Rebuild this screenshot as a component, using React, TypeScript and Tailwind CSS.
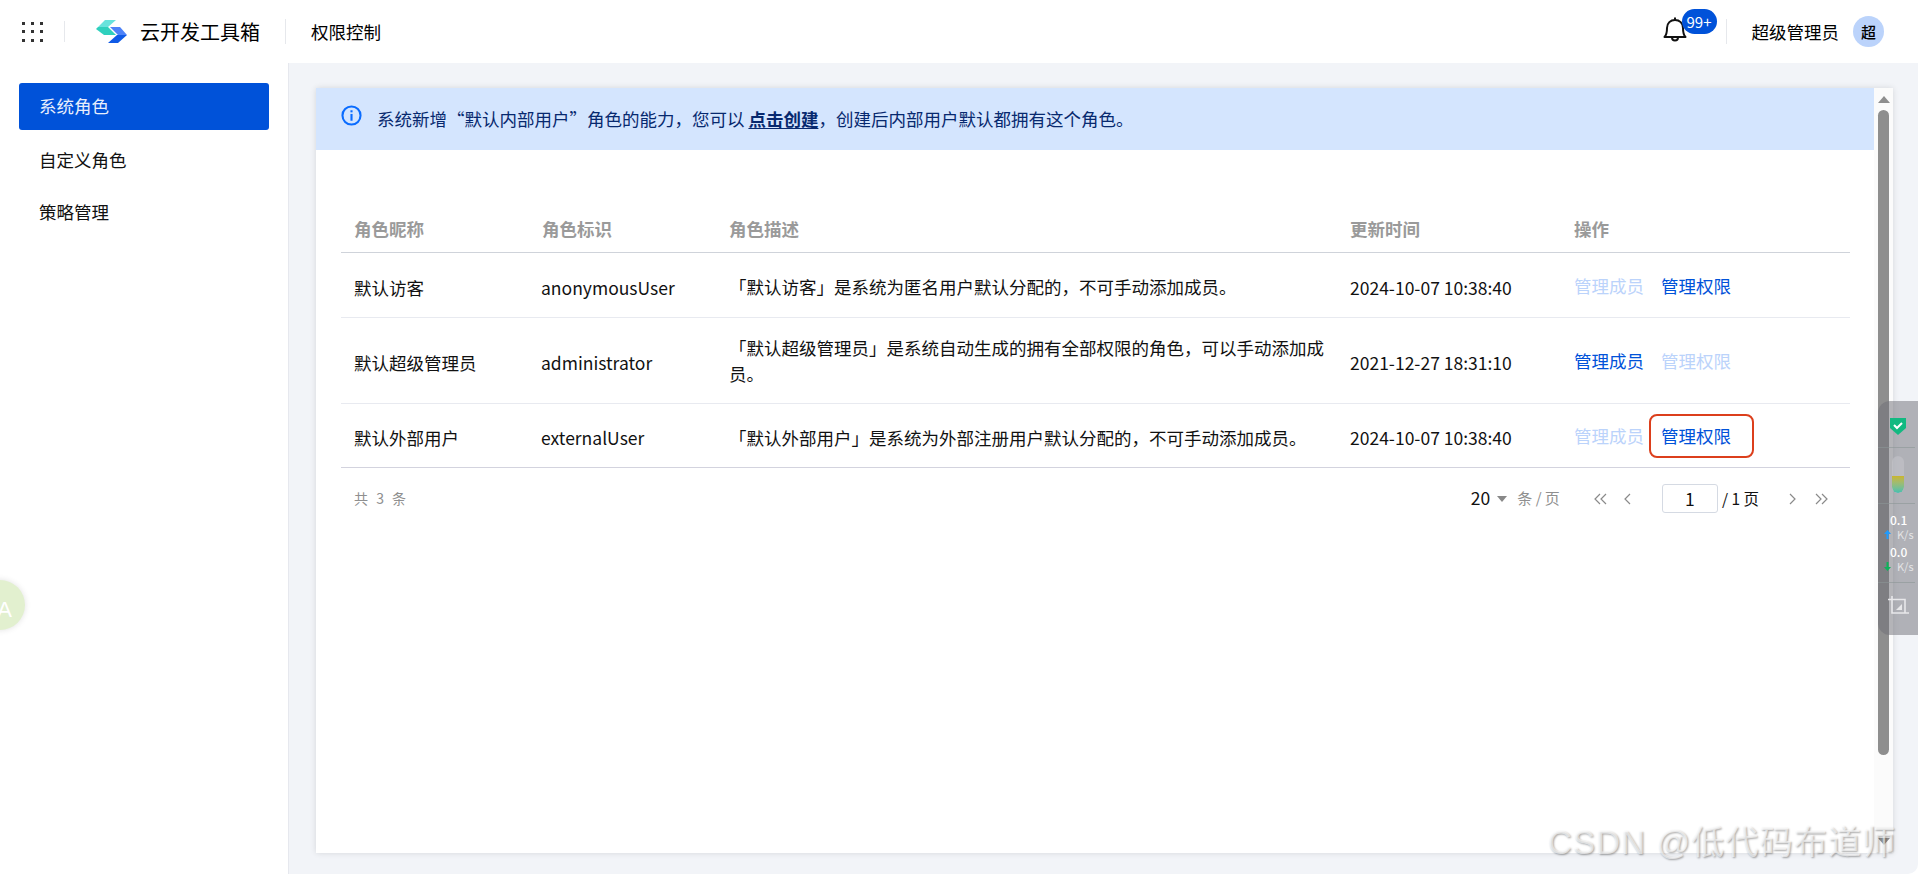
import React from "react";

const font = { fontFamily: '"Noto Sans CJK SC", "Noto Sans", sans-serif' };

function Logo() {
  return (
    <svg width="31" height="23" viewBox="0 0 31 23">
      <polygon points="0,9 9,0 20,0 12,7 2,7" fill="#68e3dc" />
      <polygon points="2,7 12,7 20,15 8,15 0,9" fill="#2fd0bd" />
      <polygon points="14,7 24,7 31,15 22,15" fill="#4d82f8" />
      <polygon points="31,15 22,23 12,23 21,15" fill="#0f5ae6" />
    </svg>
  );
}

function Dots() {
  return (
    <div className="grid grid-cols-3 gap-x-[6px] gap-y-[5.5px]">
      {Array.from({ length: 9 }).map((_, i) => (
        <span key={i} className="w-[3px] h-[3px] bg-[#333] block" />
      ))}
    </div>
  );
}

const rows = [
  { name: "默认访客", id: "anonymousUser", desc: "「默认访客」是系统为匿名用户默认分配的\uFF0C不可手动添加成员。", time: "2024-10-07 10:38:40", m: false, p: true, h: "h-[65px]", two: false },
  { name: "默认超级管理员", id: "administrator", desc: "「默认超级管理员」是系统自动生成的拥有全部权限的角色\uFF0C可以手动添加成员。", time: "2021-12-27 18:31:10", m: true, p: false, h: "h-[86px]", two: true },
  { name: "默认外部用户", id: "externalUser", desc: "「默认外部用户」是系统为外部注册用户默认分配的\uFF0C不可手动添加成员。", time: "2024-10-07 10:38:40", m: false, p: true, h: "h-[64px]", mark: true, two: false },
];

function Chevrons({ dir, double }: { dir: "l" | "r"; double?: boolean }) {
  const d = dir === "l" ? ["M7 2 L2 7 L7 12", "M13 2 L8 7 L13 12"] : ["M2 2 L7 7 L2 12", "M8 2 L13 7 L8 12"];
  return (
    <svg width="15" height="14" viewBox="0 0 15 14" fill="none" stroke="#8a8a8a" strokeWidth="1.2" className="block">
      <path d={double ? d[0] : dir === "l" ? "M10 2 L5 7 L10 12" : "M5 2 L10 7 L5 12"} />
      {double && <path d={d[1]} />}
    </svg>
  );
}

export default function App() {
  return (
    <div style={font} className="relative w-[1918px] h-[874px] overflow-hidden bg-white text-black rounded-br-[10px] flex flex-col">
      <header className="h-[63px] shrink-0 flex items-center bg-white">
        <div className="ml-[22px] w-[21px]"><Dots /></div>
        <div className="ml-[21px] w-px h-[21px] bg-[#e6e8ec]" />
        <div className="ml-[31px] flex"><Logo /></div>
        <span className="ml-[13px] text-[20px] leading-[28px] w-[120px] whitespace-nowrap">云开发工具箱</span>
        <div className="ml-[25px] w-px h-[25px] bg-[#e6e8ec]" />
        <span className="ml-[25px] text-[17.5px] leading-[24px] whitespace-nowrap">权限控制</span>
        <div className="ml-auto relative w-[24px] h-[26px] -mt-[5px]">
          <svg width="24" height="26" viewBox="0 0 24 26" fill="none" stroke="#111" strokeWidth="2" className="block -ml-[2px]">
            <path d="M1.5 21 C4 18.5 4 16 4 12 C4 7 7.5 4 12 4 C16.5 4 20 7 20 12 C20 16 20 18.5 22.5 21 Z" strokeLinejoin="round" />
            <path d="M12 1.5 V4" />
            <path d="M9 21.5 C9 25.5 15 25.5 15 21.5" />
          </svg>
          <span className="absolute left-[17px] top-[-7px] h-[25px] w-[35px] rounded-full bg-[#0052d9] text-white text-[15px] leading-[25px] text-center">99+</span>
        </div>
        <div className="ml-[37px] w-px h-[25px] bg-[#e6e8ec]" />
        <span className="ml-[25px] text-[17.5px] leading-[24px] whitespace-nowrap">超级管理员</span>
        <span className="ml-[14px] mr-[34px] w-[31px] h-[31px] rounded-full bg-[#bbd3fb] text-[15px] leading-[31px] text-center font-medium">超</span>
      </header>

      <div className="flex-1 flex min-h-0">
        <aside className="w-[289px] shrink-0 bg-white border-r border-[#e6e8ee] pt-[20px] px-[19px] text-[17.5px]">
          <div className="h-[47px] w-[250px] rounded-[3px] bg-[#0052d9] text-[#e8eefc] flex items-center pl-[20px]">系统角色</div>
          <div className="h-[52px] mt-[4px] flex items-center pl-[20px] text-[#111]">自定义角色</div>
          <div className="h-[52px] flex items-center pl-[20px] text-[#111]">策略管理</div>
        </aside>

        <main className="flex-1 bg-[#f2f4f8] pt-[25px] pl-[27px] pr-[25px] pb-[21px] min-w-0">
          <div className="h-full bg-white shadow-[0_0_6px_rgba(0,0,0,0.12)] flex">
            <div className="flex-1 min-w-0">
              <div className="h-[62px] bg-[#d4e5fe] flex items-center pl-[25px] text-[17.5px] text-[#07296f]">
                <svg width="21" height="21" viewBox="0 0 20 20" className="mr-[15px] -mt-[7px]">
                  <circle cx="10" cy="10" r="8.6" fill="none" stroke="#0a6cff" strokeWidth="2" />
                  <rect x="9" y="8.5" width="2" height="6.5" fill="#0a6cff" />
                  <rect x="9" y="5" width="2" height="2" fill="#0a6cff" />
                </svg>
                <span>系统新增“默认内部用户”角色的能力{"\uFF0C"}您可以 <a className="font-bold underline underline-offset-2">点击创建</a>{"\uFF0C"}创建后内部用户默认都拥有这个角色。</span>
              </div>

              <div className="ml-[25px] mt-[56px] mr-[24px]">
                <div className="grid grid-cols-[187px_187px_621px_224px_1fr] h-[47px] items-center border-b border-[#cfd3da] text-[17.5px] font-bold text-[#9a9a9a]">
                  <div className="pl-[13px]">角色昵称</div>
                  <div className="pl-[14px]">角色标识</div>
                  <div className="pl-[14px]">角色描述</div>
                  <div className="pl-[14px]">更新时间</div>
                  <div className="pl-[14px]">操作</div>
                </div>
                {rows.map((r, i) => (
                  <div key={r.id} className={`grid grid-cols-[187px_187px_621px_224px_1fr] ${r.h} pt-[5px] items-center border-b ${i === 2 ? "border-[#d3d3de]" : "border-[#e8eaf0]"} text-[17.5px] text-[#111]`}>
                    <div className="pl-[13px] mt-[1px]">{r.name}</div>
                    <div className="pl-[14px] -ml-px mt-[1px]">{r.id}</div>
                    <div className={`pl-[14px] pr-[8px] leading-[26px] ${r.two ? "-mt-[4px]" : "-mt-[1px]"}`}>{r.desc}</div>
                    <div className="pl-[14px] mt-[1px]">{r.time}</div>
                    <div className="pl-[14px] flex gap-[17px] -mt-[3px]">
                      <span className={r.m ? "text-[#0052d9]" : "text-[#bbd3fb]"}>管理成员</span>
                      <span className={`relative ${r.p ? "text-[#0052d9]" : "text-[#bbd3fb]"}`}>
                        管理权限
                        {r.mark && <span className="absolute left-[-12px] top-[-9px] w-[105px] h-[44px] border-[2.5px] border-[#dc3f1c] rounded-[8px]" />}
                      </span>
                    </div>
                  </div>
                ))}
                <div className="flex items-center h-[60px] pt-[1px] pl-[13px] pr-[21px] text-[#8f8f8f]">
                  <span className="text-[14px] tracking-[2.5px]">共 3 条</span>
                  <span className="ml-auto text-[17.5px] text-[#111]">20</span>
                  <span className="ml-[7px] w-0 h-0 border-x-[5px] border-x-transparent border-t-[6px] border-t-[#888]" />
                  <span className="ml-[10px] text-[15px] text-[#8f8f8f]">条 / 页</span>
                  <span className="ml-[33px]"><Chevrons dir="l" double /></span>
                  <span className="ml-[12px]"><Chevrons dir="l" /></span>
                  <span className="ml-[27px] w-[56px] h-[29px] rounded-[3px] border border-[#d5dae3] text-[#111] text-[17.5px] leading-[27px] text-center">1</span>
                  <span className="ml-[4px] text-[15.5px] text-[#111]">/ 1 页</span>
                  <span className="ml-[26px]"><Chevrons dir="r" /></span>
                  <span className="ml-[14px]"><Chevrons dir="r" double /></span>
                </div>
              </div>
            </div>

            <div className="w-[19px] shrink-0 bg-[#fbfbfb] flex flex-col items-center pt-[8px]">
              <span className="w-0 h-0 border-x-[6px] border-x-transparent border-b-[7px] border-b-[#8e8e8e]" />
              <div className="mt-[7px] w-[11px] h-[645px] rounded-[6px] bg-[#8e8e8e]" />
              <span className="mt-auto mb-[8px] w-0 h-0 border-x-[6px] border-x-transparent border-t-[7px] border-t-[#8e8e8e]" />
            </div>
          </div>
        </main>
      </div>

      {/* floating monitor widget */}
      <div className="absolute left-[1878px] top-[401px] w-[40px] h-[234px] rounded-l-[12px] bg-[rgba(110,110,118,0.5)] text-white flex flex-col items-start pl-[12px]">
        <svg width="16" height="18" viewBox="0 0 16 18" className="mt-[16px] block">
          <path d="M0 1 H16 V11 L8 18 L0 11 Z" fill="#12b981" />
          <path d="M4 8 L7 11 L12 6" stroke="#fff" strokeWidth="2" fill="none" />
        </svg>
        <div className="mt-[12px] -ml-[12px] w-[37px] h-px bg-[rgba(140,150,150,0.6)]" />
        <div className="mt-[8px] ml-[2px] w-[12px] h-[37px] rounded-full bg-[rgba(200,200,205,0.5)] overflow-hidden flex flex-col justify-end">
          <div className="h-[17px] bg-gradient-to-b from-[#c9b52a] to-[#3cc0b0] rounded-b-full" />
        </div>
        <div className="mt-[10px] -ml-[12px] w-[37px] h-px bg-[rgba(140,150,150,0.6)]" />
        <div className="mt-[9px] text-[12px] leading-[14px] font-medium">0.1</div>
        <div className="flex items-center -ml-[6px] gap-[6px] text-[11px] leading-[14px] text-[#e4e4e6]">
          <svg width="7" height="9" viewBox="0 0 7 9" className="block"><path d="M3.5 0 L7 4 H4.5 V9 H2.5 V4 H0 Z" fill="#1e9bff" /></svg>
          <span>K/s</span>
        </div>
        <div className="mt-[4px] text-[12px] leading-[14px] font-medium">0.0</div>
        <div className="flex items-center -ml-[6px] gap-[6px] text-[11px] leading-[14px] text-[#e4e4e6]">
          <svg width="7" height="9" viewBox="0 0 7 9" className="block"><path d="M3.5 9 L7 5 H4.5 V0 H2.5 V5 H0 Z" fill="#0cb35a" /></svg>
          <span>K/s</span>
        </div>
        <div className="mt-[9px] -ml-[12px] w-[37px] h-px bg-[rgba(140,150,150,0.6)]" />
        <svg width="21" height="21" viewBox="0 0 21 21" fill="none" stroke="#e8e8ea" strokeWidth="1.6" className="mt-[13px] -ml-[2px] block">
          <path d="M0 3.5 H17 V17" /><path d="M4 0 V17 H21" />
          <polygon points="8,14 14,14 14,8" fill="#e8e8ea" stroke="none" />
        </svg>
      </div>

      {/* floating translate bubble */}
      <div className="absolute left-[-25px] top-[580px] w-[50px] h-[50px] rounded-full bg-[#e2f0cf] shadow-[0_0_6px_rgba(0,0,0,0.12)] text-white text-[22px] leading-[60px] text-right pr-[13px]" style={{ fontFamily: '"Liberation Sans", sans-serif' }}>A</div>

      {/* watermark */}
      <div className="absolute left-[1548px] top-[821px] text-[33px] leading-[44px] tracking-[1.2px] whitespace-nowrap text-[rgba(255,255,255,0.6)] [text-shadow:1px_1px_2px_rgba(0,0,0,0.35)]" style={{ fontFamily: '"Liberation Sans", "Noto Sans CJK SC", sans-serif' }}>CSDN @低代码布道师</div>
    </div>
  );
}
